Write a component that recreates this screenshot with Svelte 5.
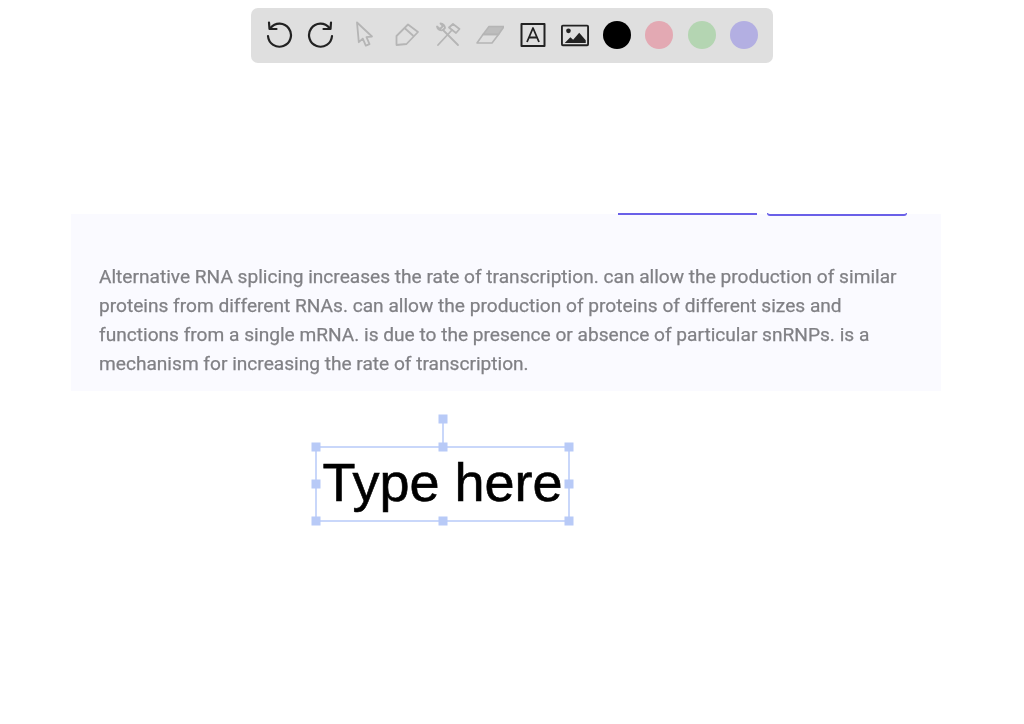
<script>
  const paragraph =
    'Alternative RNA splicing increases the rate of transcription. can allow the production of similar proteins from different RNAs. can allow the production of proteins of different sizes and functions from a single mRNA. is due to the presence or absence of particular snRNPs. is a mechanism for increasing the rate of transcription.';
  const swatches = ['#000000', '#e3a9b3', '#b4d5b2', '#b3afe2'];
  const handles = [
    [0, 0], [50, 0], [100, 0],
    [0, 50], [100, 50],
    [0, 100], [50, 100], [100, 100]
  ];
</script>

<div class="page">
  <div class="toolbar">
    <button class="tool" aria-label="Undo">
      <svg viewBox="0 0 28 28" fill="none" stroke="#222" stroke-width="2.2" stroke-linecap="round" stroke-linejoin="round">
        <path d="M5.500 7A11.500 11.500 0 1 1 3 15"></path>
        <polyline points="4 1.500 4.500 8 11.500 8"></polyline>
      </svg>
    </button>
    <button class="tool" aria-label="Redo">
      <svg viewBox="0 0 28 28" fill="none" stroke="#222" stroke-width="2.2" stroke-linecap="round" stroke-linejoin="round">
        <path d="M22.500 7A11.500 11.500 0 1 0 25 15"></path>
        <polyline points="24 1.500 23.500 8 16.500 8"></polyline>
      </svg>
    </button>
    <button class="tool" aria-label="Select">
      <svg viewBox="0 0 28 28" fill="none" stroke="#b5b5b5" stroke-width="1.800" stroke-linejoin="round">
        <path d="M7 1.500 22 15.500l-5.500.6 3 7-3.700 1.500-3-7-4 3.600z"></path>
      </svg>
    </button>
    <button class="tool" aria-label="Pencil">
      <svg viewBox="0 0 28 28" fill="none" stroke="#b5b5b5" stroke-width="1.800" stroke-linejoin="round">
        <path d="M4.500 24 4.500 15 16 3.500 26 11 14.500 23z"></path>
        <path d="M12.500 7l9 8"></path>
      </svg>
    </button>
    <button class="tool" aria-label="Tools">
      <svg viewBox="0 0 28 28" fill="none" stroke="#b5b5b5" stroke-width="1.800" stroke-linecap="round" stroke-linejoin="round">
        <path d="M24 24 9 9"></path>
        <path d="M3 5.500a4.500 4.500 0 0 0 6 3.500l2-2a4.500 4.500 0 0 0-4.500-4.500L9 5 6 8z"></path>
        <path d="M4 24 18 9"></path>
        <path d="M15 6.500 19 3l6.500 5-3.500 4z"></path>
      </svg>
    </button>
    <button class="tool" aria-label="Eraser">
      <svg viewBox="0 0 28 28" fill="none" stroke="#b5b5b5" stroke-width="1.600" stroke-linejoin="round">
        <path d="M13 5.500h15l-5.500 8H7z" fill="#bdbdbd"></path>
        <path d="M7 13.500h15.500l-6.500 8.500H1z"></path>
      </svg>
    </button>
    <button class="tool" aria-label="Text">
      <svg viewBox="0 0 28 28" fill="none" stroke="#222" stroke-linejoin="round">
        <rect x="2.500" y="3" width="23" height="22" stroke-width="2"></rect>
        <path d="M8 21 14 7l6 14M10 16.500h8" stroke-width="1.800"></path>
      </svg>
    </button>
    <button class="tool" aria-label="Image">
      <svg viewBox="0 0 30 28" fill="none">
        <rect x="1" y="4" width="28" height="21" rx="1" stroke="#222" stroke-width="2"></rect>
        <circle cx="8" cy="9.500" r="2.500" fill="#222"></circle>
        <path d="M4 22.500l6-6 3 2.500 6.500-7.500 7 8v3z" fill="#222"></path>
      </svg>
    </button>
    {#each swatches as color}
      <button class="swatch" style="background: {color}" aria-label="Colour {color}"></button>
    {/each}
  </div>

  <div class="tabs">
    <span class="tab"></span>
    <span class="tab curved"></span>
  </div>

  <section class="card">
    <p>{paragraph}</p>
  </section>

  <div class="canvas">
    <div class="selection">
      <div class="handles">
        <span class="stem"></span>
        <span class="handle rotate"></span>
        {#each handles as [x, y]}
          <span class="handle" style="left: {x}%; top: {y}%"></span>
        {/each}
      </div>
      <span class="typed">Type here</span>
    </div>
  </div>
</div>

<style>
  :global(body) {
    background: #fff;
  }

  .page {
    display: flex;
    flex-direction: column;
    height: 724px;
    overflow: hidden;
    font-family: Roboto, "Liberation Sans", sans-serif;
  }

  .toolbar {
    align-self: flex-start;
    display: flex;
    align-items: center;
    justify-content: space-between;
    width: 522px;
    height: 55px;
    box-sizing: border-box;
    margin: 8px 0 0 251px;
    padding: 0 15px 1px 14px;
    background: #dfdfdf;
    border-radius: 7px;
    filter: blur(0.4px);
  }

  .tool,
  .swatch {
    flex: none;
    width: 28px;
    height: 28px;
    padding: 0;
    border: 0;
    background: none;
  }

  .tool svg {
    display: block;
    width: 100%;
    height: 100%;
  }

  .swatch {
    border-radius: 50%;
  }

  .tabs {
    display: flex;
    justify-content: flex-end;
    gap: 10px;
    margin: 150px 117px 0 0;
    height: 2px;
    filter: blur(0.3px);
  }

  .tab {
    width: 139px;
    height: 2px;
    background: #6a60e8;
    box-sizing: border-box;
  }

  .tab.curved {
    width: 140px;
    height: 3px;
    background: none;
    border-bottom: 2px solid #6a60e8;
    border-left: 1px solid #6a60e8;
    border-right: 1px solid #6a60e8;
    border-radius: 0 0 4px 4px;
  }

  .card {
    box-sizing: border-box;
    width: 870px;
    height: 177px;
    margin: -1px 0 0 71px;
    padding: 48px 28px 0;
    background: #fafaff;
  }

  .card p {
    margin: 0;
    font-size: 19.12px;
    line-height: 29px;
    color: #808085;
    -webkit-text-stroke: 0.25px #808085;
    filter: blur(0.4px);
  }

  .canvas {
    flex: 1;
    padding: 55px 0 0 315px;
  }

  .selection {
    position: relative;
    box-sizing: border-box;
    width: 255px;
    height: 76px;
    border: 2px solid #c9d7fa;
    display: flex;
    align-items: center;
    justify-content: center;
  }

  .typed {
    font-family: "Liberation Sans", Arial, sans-serif;
    font-size: 54px;
    color: #000;
    line-height: 1;
    margin-top: -4px;
    -webkit-text-stroke: 0.6px #000;
    filter: blur(0.4px);
  }

  .handles {
    position: absolute;
    inset: -1px;
  }

  .handle {
    position: absolute;
    width: 9px;
    height: 9px;
    background: #b8caf7;
    transform: translate(-50%, -50%);
  }

  .handle.rotate {
    left: 50%;
    top: -28px;
  }

  .stem {
    position: absolute;
    left: 50%;
    top: -28px;
    width: 2px;
    height: 28px;
    margin-left: -1px;
    background: #c9d7fa;
  }
</style>
